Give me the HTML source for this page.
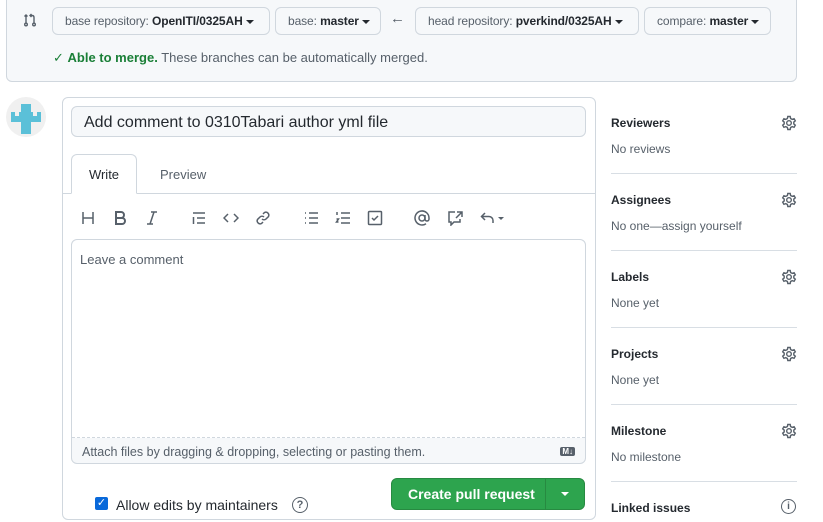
<!DOCTYPE html><html><head><style>
body{margin:0;width:823px;height:522px;overflow:hidden;background:#fff;font-family:"Liberation Sans",sans-serif;color:#24292f;position:relative;font-size:13px}
.a{position:absolute}
.top{left:6px;top:-6px;width:789px;height:86px;background:#f6f8fa;border:1px solid #d0d7de;border-radius:6px}
.btn{position:absolute;top:7px;height:28px;border:1px solid #d0d7de;border-radius:6px;background:#f6f8fa;font-size:12px;line-height:26px;padding:0 0 0 12px;color:#57606a;box-sizing:border-box;white-space:nowrap;letter-spacing:-0.1px}
.btn b{color:#24292f;font-weight:600}
.car{display:inline-block;border:4px solid transparent;border-top-color:#24292f;border-bottom:0;vertical-align:middle;margin-left:3px}
.side .t{position:absolute;left:611px;font-size:12px;font-weight:bold;color:#24292f}
.side .s{position:absolute;left:611px;font-size:12px;color:#57606a}
.side .l{position:absolute;left:611px;width:186px;border-top:1px solid #d8dee4}
.ic{position:absolute}
.tb svg{position:absolute;top:0}
</style></head><body>
<div class="a top"></div>
<svg class="a" style="left:22px;top:12px" width="16" height="16" viewBox="0 0 16 16" fill="none" stroke="#57606a" stroke-width="1.4"><path d="M4 3v8M2.5 4.5 4 3l1.5 1.5M12 11V5.5Q12 3.5 10 3.5H8M9.5 2 8 3.5 9.5 5"/><circle cx="12" cy="12.5" r="1.3"/><circle cx="4" cy="12.5" r="1.3"/></svg>
<div class="btn" style="left:52px;width:218px">base repository: <b>OpenITI/0325AH</b><span class="car"></span></div>
<div class="btn" style="left:275px;width:106px">base: <b>master</b><span class="car"></span></div>
<div class="a" style="left:390px;top:10px;font-size:15px;color:#57606a">←</div>
<div class="btn" style="left:415px;width:224px">head repository: <b>pverkind/0325AH</b><span class="car"></span></div>
<div class="btn" style="left:644px;width:127px">compare: <b>master</b><span class="car"></span></div>
<div class="a" style="left:53px;top:50px;font-size:13px;color:#57606a"><span style="color:#1a7f37">✓ <b>Able to merge.</b></span> These branches can be automatically merged.</div>
<svg class="a" style="left:6px;top:97px" width="40" height="40"><circle cx="20" cy="20" r="20" fill="#f0f0f0"/><path d="M15 7h10v8h10v10H25v12H15V25H5V15h10z" fill="#5bc0d8"/><path d="M9 15h4v4H9zM27 15h4v4h-4z" fill="#f0f0f0"/></svg>
<div class="a" style="left:62px;top:97px;width:532px;height:421px;border:1px solid #d0d7de;border-radius:6px"></div>
<div class="a" style="left:71px;top:106px;height:31px;border:1px solid #d0d7de;border-radius:6px;background:#f6f8fa;font-size:16px;line-height:31px;padding-left:12px;box-sizing:border-box;width:515px">Add comment to 0310Tabari author yml file</div>
<div class="a" style="left:62px;top:193px;width:533px;border-top:1px solid #d0d7de"></div>
<div class="a" style="left:71px;top:154px;width:66px;height:40px;border:1px solid #d0d7de;border-bottom:1px solid #fff;border-radius:6px 6px 0 0;box-sizing:border-box;background:#fff;text-align:center;line-height:40px;font-size:13px">Write</div>
<div class="a" style="left:160px;top:167px;color:#57606a">Preview</div>
<div class="a tb" style="left:80px;top:210px;width:440px;height:16px">
<svg style="left:0" width="16" height="16" fill="none" stroke="#57606a" stroke-width="1.5"><path d="M3 2v12M13 2v12M3 8h10"/></svg>
<svg style="left:32px" width="16" height="16" fill="none" stroke="#57606a" stroke-width="2"><path d="M4 2h5a3 3 0 0 1 0 6H4zM4 8h6a3 3 0 0 1 0 6H4z"/></svg>
<svg style="left:64px" width="16" height="16" fill="none" stroke="#57606a" stroke-width="1.5"><path d="M7 2h6M3 14h6M10 2 6 14"/></svg>
<svg style="left:111px" width="16" height="16" fill="none" stroke="#57606a" stroke-width="1.5"><path d="M2 3h12M6 8h8M6 13h8M2.5 7v7"/></svg>
<svg style="left:143px" width="16" height="16" fill="none" stroke="#57606a" stroke-width="1.5"><path d="M5 4 1 8l4 4M11 4l4 4-4 4"/></svg>
<svg style="left:175px" width="16" height="16" fill="none" stroke="#57606a" stroke-width="1.5"><path d="M7 9a3 3 0 0 0 4 0l2.5-2.5a3 3 0 0 0-4-4L8 4M9 7a3 3 0 0 0-4 0L2.5 9.5a3 3 0 0 0 4 4L8 12"/></svg>
<svg style="left:223px" width="16" height="16" fill="none" stroke="#57606a" stroke-width="1.5"><path d="M6 3h9M6 8h9M6 13h9M2 3h1M2 8h1M2 13h1"/></svg>
<svg style="left:255px" width="16" height="16" fill="none" stroke="#57606a" stroke-width="1.5"><path d="M6 3h9M6 8h9M6 13h9M2 2v3M1.5 9h2l-2 3h2"/></svg>
<svg style="left:287px" width="16" height="16" fill="none" stroke="#57606a" stroke-width="1.5"><rect x="1.5" y="1.5" width="13" height="13" rx="1"/><path d="m5 8 2 2 4-4"/></svg>
<svg style="left:334px" width="16" height="16" fill="none" stroke="#57606a" stroke-width="1.5"><circle cx="8" cy="8" r="3"/><path d="M11 5v4a2 2 0 0 0 4 0V8a7 7 0 1 0-3 5.7"/></svg>
<svg style="left:367px" width="16" height="16" fill="none" stroke="#57606a" stroke-width="1.5"><path d="M8 2H2v10h2v3l3-3h6V9M10 2h5v5M15 2l-6 6"/></svg>
<svg style="left:400px" width="28" height="16" fill="none" stroke="#57606a" stroke-width="1.5"><path d="M5 3 1.5 6.5 5 10M2 6.5h7a4 4 0 0 1 4 4V13"/><path d="M18 7h6l-3 3z" fill="#57606a" stroke="none"/></svg>
</div>
<div class="a" style="left:71px;top:239px;width:515px;height:225px;border:1px solid #d0d7de;border-radius:6px;box-sizing:border-box;background:#f6f8fa"><div style="background:#fff;height:198px;border-bottom:1px dashed #d0d7de;border-radius:6px 6px 0 0;padding:12px 8px;box-sizing:border-box;color:#57606a">Leave a comment</div><div style="padding:7px 10px;font-size:12.5px;color:#57606a">Attach files by dragging &amp; dropping, selecting or pasting them.<span style="float:right;background:#57606a;color:#fff;font-size:8px;font-weight:bold;padding:0 2px;border-radius:2px;margin-top:2px">M↓</span></div></div>
<div class="a" style="left:95px;top:497px;width:13px;height:13px;background:#0969da;border-radius:2px;color:#fff;font-size:11px;line-height:13px;text-align:center">✓</div>
<div class="a" style="left:116px;top:497px;font-size:14px">Allow edits by maintainers</div>
<div class="a" style="left:292px;top:497px;width:14px;height:14px;border:1.5px solid #57606a;border-radius:50%;font-size:11px;line-height:14px;text-align:center;color:#57606a;font-weight:bold">?</div>
<div class="a" style="left:391px;top:478px;width:194px;height:32px;background:#2da44e;border:1px solid #278a41;border-radius:6px;box-sizing:border-box;color:#fff;font-size:14px;font-weight:bold;line-height:30px"><span style="position:absolute;left:16px">Create pull request</span><span style="position:absolute;left:153px;top:0;height:30px;border-left:1px solid #278a41"></span><span class="car" style="position:absolute;left:166px;top:13px;border-top-color:#fff"></span></div>
<div class="side">
<div class="t" style="top:116px">Reviewers</div><div class="s" style="top:142px">No reviews</div><div class="l" style="top:173px"></div>
<div class="t" style="top:193px">Assignees</div><div class="s" style="top:219px">No one—assign yourself</div><div class="l" style="top:250px"></div>
<div class="t" style="top:270px">Labels</div><div class="s" style="top:296px">None yet</div><div class="l" style="top:327px"></div>
<div class="t" style="top:347px">Projects</div><div class="s" style="top:373px">None yet</div><div class="l" style="top:404px"></div>
<div class="t" style="top:424px">Milestone</div><div class="s" style="top:450px">No milestone</div><div class="l" style="top:481px"></div>
<div class="t" style="top:501px">Linked issues</div>
<svg class="ic" style="left:781px;top:115px" width="16" height="16" fill="none" stroke="#57606a" stroke-width="1.4"><circle cx="8" cy="8" r="2.3"/><path d="M6.8 1.5h2.4l.4 2 1.6.9 1.9-.7 1.2 2.1-1.5 1.3v1.8l1.5 1.3-1.2 2.1-1.9-.7-1.6.9-.4 2H6.8l-.4-2-1.6-.9-1.9.7-1.2-2.1 1.5-1.3V7.1L1.7 5.8l1.2-2.1 1.9.7 1.6-.9z"/></svg>
<svg class="ic" style="left:781px;top:192px" width="16" height="16" fill="none" stroke="#57606a" stroke-width="1.4"><circle cx="8" cy="8" r="2.3"/><path d="M6.8 1.5h2.4l.4 2 1.6.9 1.9-.7 1.2 2.1-1.5 1.3v1.8l1.5 1.3-1.2 2.1-1.9-.7-1.6.9-.4 2H6.8l-.4-2-1.6-.9-1.9.7-1.2-2.1 1.5-1.3V7.1L1.7 5.8l1.2-2.1 1.9.7 1.6-.9z"/></svg>
<svg class="ic" style="left:781px;top:269px" width="16" height="16" fill="none" stroke="#57606a" stroke-width="1.4"><circle cx="8" cy="8" r="2.3"/><path d="M6.8 1.5h2.4l.4 2 1.6.9 1.9-.7 1.2 2.1-1.5 1.3v1.8l1.5 1.3-1.2 2.1-1.9-.7-1.6.9-.4 2H6.8l-.4-2-1.6-.9-1.9.7-1.2-2.1 1.5-1.3V7.1L1.7 5.8l1.2-2.1 1.9.7 1.6-.9z"/></svg>
<svg class="ic" style="left:781px;top:346px" width="16" height="16" fill="none" stroke="#57606a" stroke-width="1.4"><circle cx="8" cy="8" r="2.3"/><path d="M6.8 1.5h2.4l.4 2 1.6.9 1.9-.7 1.2 2.1-1.5 1.3v1.8l1.5 1.3-1.2 2.1-1.9-.7-1.6.9-.4 2H6.8l-.4-2-1.6-.9-1.9.7-1.2-2.1 1.5-1.3V7.1L1.7 5.8l1.2-2.1 1.9.7 1.6-.9z"/></svg>
<svg class="ic" style="left:781px;top:423px" width="16" height="16" fill="none" stroke="#57606a" stroke-width="1.4"><circle cx="8" cy="8" r="2.3"/><path d="M6.8 1.5h2.4l.4 2 1.6.9 1.9-.7 1.2 2.1-1.5 1.3v1.8l1.5 1.3-1.2 2.1-1.9-.7-1.6.9-.4 2H6.8l-.4-2-1.6-.9-1.9.7-1.2-2.1 1.5-1.3V7.1L1.7 5.8l1.2-2.1 1.9.7 1.6-.9z"/></svg>
<div class="ic" style="left:781px;top:499px;width:13px;height:13px;border:1.5px solid #57606a;border-radius:50%;font-size:10px;line-height:13px;text-align:center;font-weight:bold;color:#57606a">i</div>
</div>
</body></html>
